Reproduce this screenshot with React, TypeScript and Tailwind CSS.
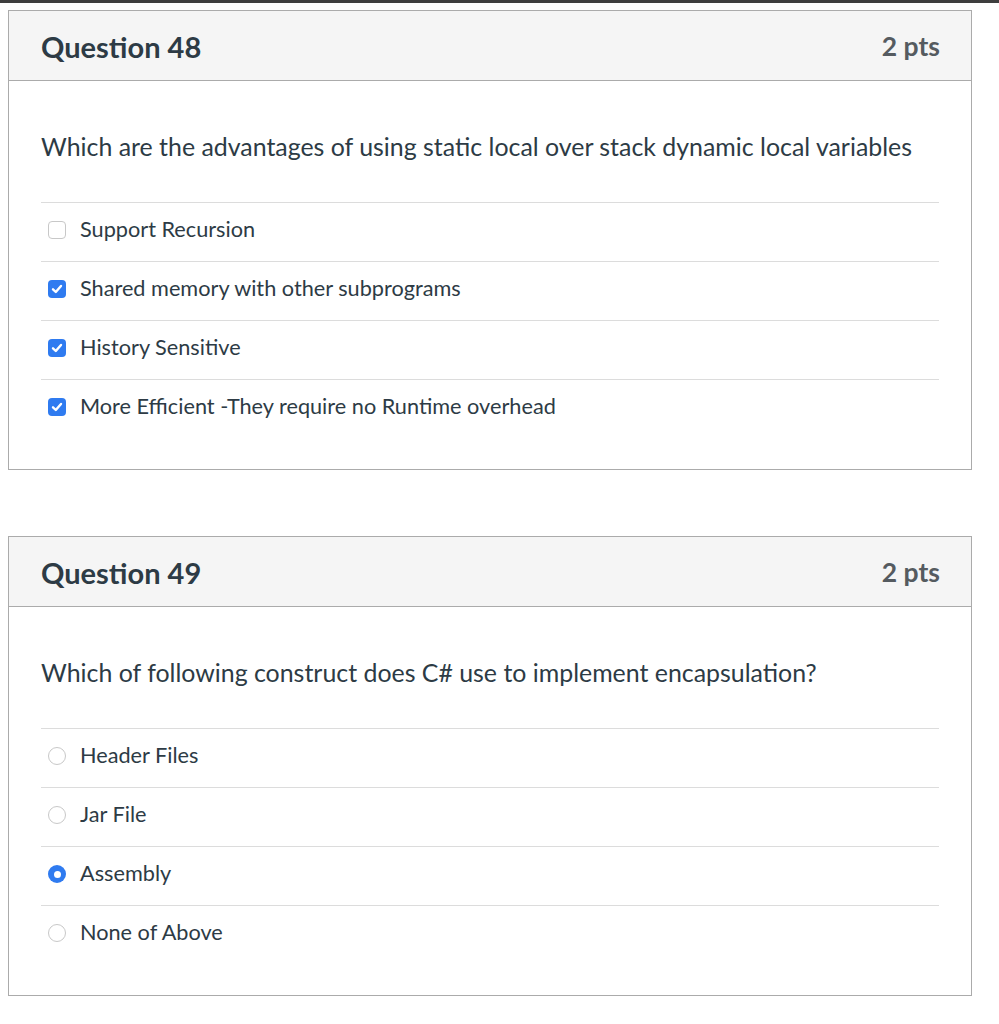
import React from "react";

type Opt = { label: string; checked: boolean };

const Check = ({ checked }: { checked: boolean }) =>
  checked ? (
    <span className="flex h-[18px] w-[18px] items-center justify-center rounded-[4px] bg-[#2f7bf0]">
      <svg width="12" height="12" viewBox="0 0 12 12" fill="none">
        <path d="M2 6.3 L4.8 9 L10 3" stroke="white" strokeWidth="2.4" strokeLinecap="round" strokeLinejoin="round" />
      </svg>
    </span>
  ) : (
    <span className="h-[18px] w-[18px] rounded-[4px] border border-[#c8c8c8] bg-white" />
  );

const Radio = ({ checked }: { checked: boolean }) =>
  checked ? (
    <span className="flex h-[18px] w-[18px] items-center justify-center rounded-full bg-[#2f7bf0]">
      <span className="h-[7px] w-[7px] rounded-full bg-white" />
    </span>
  ) : (
    <span className="h-[18px] w-[18px] rounded-full border border-[#c8c8c8] bg-white" />
  );

function Card({
  title,
  question,
  options,
  kind,
}: {
  title: string;
  question: string;
  options: Opt[];
  kind: "check" | "radio";
}) {
  return (
    <div className="ml-[8px] w-[964px] border border-[#ababab] bg-white">
      <div className="flex h-[70px] items-center justify-between border-b border-[#ababab] bg-[#f5f5f5] pl-[32px] pr-[31px]">
        <h2 className="pt-[2px] text-[29px] font-bold leading-none text-[#2d3b45]">{title}</h2>
        <span className="pt-[2px] text-[26.5px] font-bold leading-none text-[#555b60]">2 pts</span>
      </div>
      <div className="px-[32px] pb-[31px] pt-[50px]">
        <p className="mb-[41px] text-[24.9px] leading-[30px] text-[#2d3b45]">{question}</p>
        <div>
          {options.map((o) => (
            <div
              key={o.label}
              className="flex h-[59px] items-center gap-[14px] border-t border-[#dcdcdc] pb-[4px] pl-[7px]"
            >
              {kind === "check" ? <Check checked={o.checked} /> : <Radio checked={o.checked} />}
              <span className="text-[21.7px] leading-none text-[#2d3b45]">{o.label}</span>
            </div>
          ))}
        </div>
      </div>
    </div>
  );
}

export default function App() {
  return (
    <div
      className="min-h-[1024px] w-[999px] bg-white"
      style={{ fontFamily: "Lato, 'Noto Sans', sans-serif" }}
    >
      <div className="h-[3px] w-full bg-[#3e3e3e]" />
      <div className="h-[7px]" />
      <Card
        title="Question 48"
        question="Which are the advantages of using static local over stack dynamic local variables"
        kind="check"
        options={[
          { label: "Support Recursion", checked: false },
          { label: "Shared memory with other subprograms", checked: true },
          { label: "History Sensitive", checked: true },
          { label: "More Efficient -They require no Runtime overhead", checked: true },
        ]}
      />
      <div className="h-[66px]" />
      <Card
        title="Question 49"
        question="Which of following construct does C# use to implement encapsulation?"
        kind="radio"
        options={[
          { label: "Header Files", checked: false },
          { label: "Jar File", checked: false },
          { label: "Assembly", checked: true },
          { label: "None of Above", checked: false },
        ]}
      />
    </div>
  );
}
